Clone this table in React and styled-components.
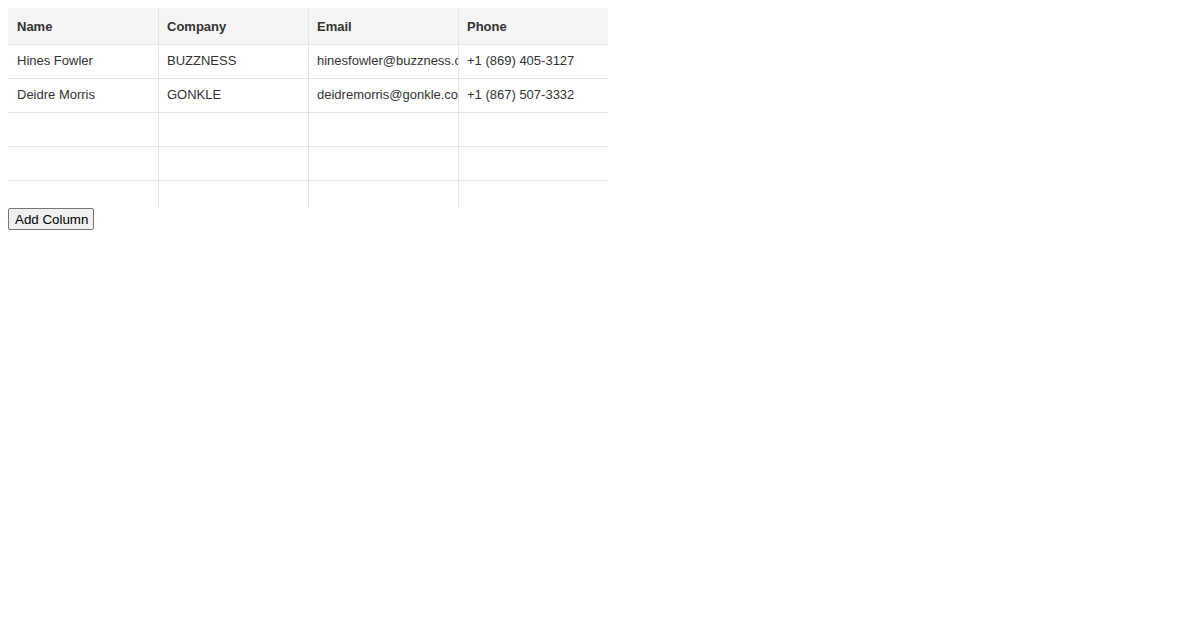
import React, { useState } from "react";
import styled, { createGlobalStyle } from "styled-components";

const GlobalStyle = createGlobalStyle`
  body {
    margin: 8px;
    background: #fff;
    font-family: "Liberation Sans", Arial, sans-serif;
  }
`;

const Grid = styled.div`
  width: 600px;
  height: 200px;
  overflow: hidden;
  font-family: "Liberation Sans", Arial, sans-serif;
  font-size: 13px;
  color: #333;
`;

const Row = styled.div`
  display: grid;
  grid-template-columns: ${(p) => `repeat(${p.cols}, 150px)`};
  height: ${(p) => (p.header ? "36px" : "34px")};
  background: ${(p) => (p.header ? "#f5f5f5" : "#fff")};
  box-sizing: border-box;
  border-top: ${(p) => (p.header ? "none" : "1px solid #e5e5e5")};
`;

const Cell = styled.div`
  display: flex;
  align-items: center;
  padding: ${(p) => (p.header ? "0 8px" : "0 8px 2px")};
  box-sizing: border-box;
  border-left: 1px solid #e5e5e5;
  white-space: nowrap;
  overflow: hidden;
  font-weight: ${(p) => (p.header ? "bold" : "normal")};

  &:first-child {
    border-left-color: transparent;
  }
`;

const AddButton = styled.button`
  font-family: "Liberation Sans", Arial, sans-serif;
  font-size: 13.333px;
  color: #000;
  background: #efefef;
  border: 1px solid #767676;
  border-radius: 2px;
  padding: 1px 5px 1px 6px;
  height: 22px;
  margin: 0;
  display: block;
`;

const rows = [
  ["Hines Fowler", "BUZZNESS", "hinesfowler@buzzness.com", "+1 (869) 405-3127"],
  ["Deidre Morris", "GONKLE", "deidremorris@gonkle.com", "+1 (867) 507-3332"],
  ["", "", "", ""],
  ["", "", "", ""],
  ["", "", "", ""],
];

export default function App() {
  const [columns, setColumns] = useState(["Name", "Company", "Email", "Phone"]);

  return (
    <>
      <GlobalStyle />
      <Grid>
        <Row header cols={columns.length}>
          {columns.map((c) => (
            <Cell header key={c}>
              {c}
            </Cell>
          ))}
        </Row>
        {rows.map((r, i) => (
          <Row key={i} cols={columns.length}>
            {columns.map((c, j) => (
              <Cell key={c}>{r[j] || ""}</Cell>
            ))}
          </Row>
        ))}
      </Grid>
      <AddButton onClick={() => setColumns([...columns, "Column " + (columns.length + 1)])}>
        Add Column
      </AddButton>
    </>
  );
}
